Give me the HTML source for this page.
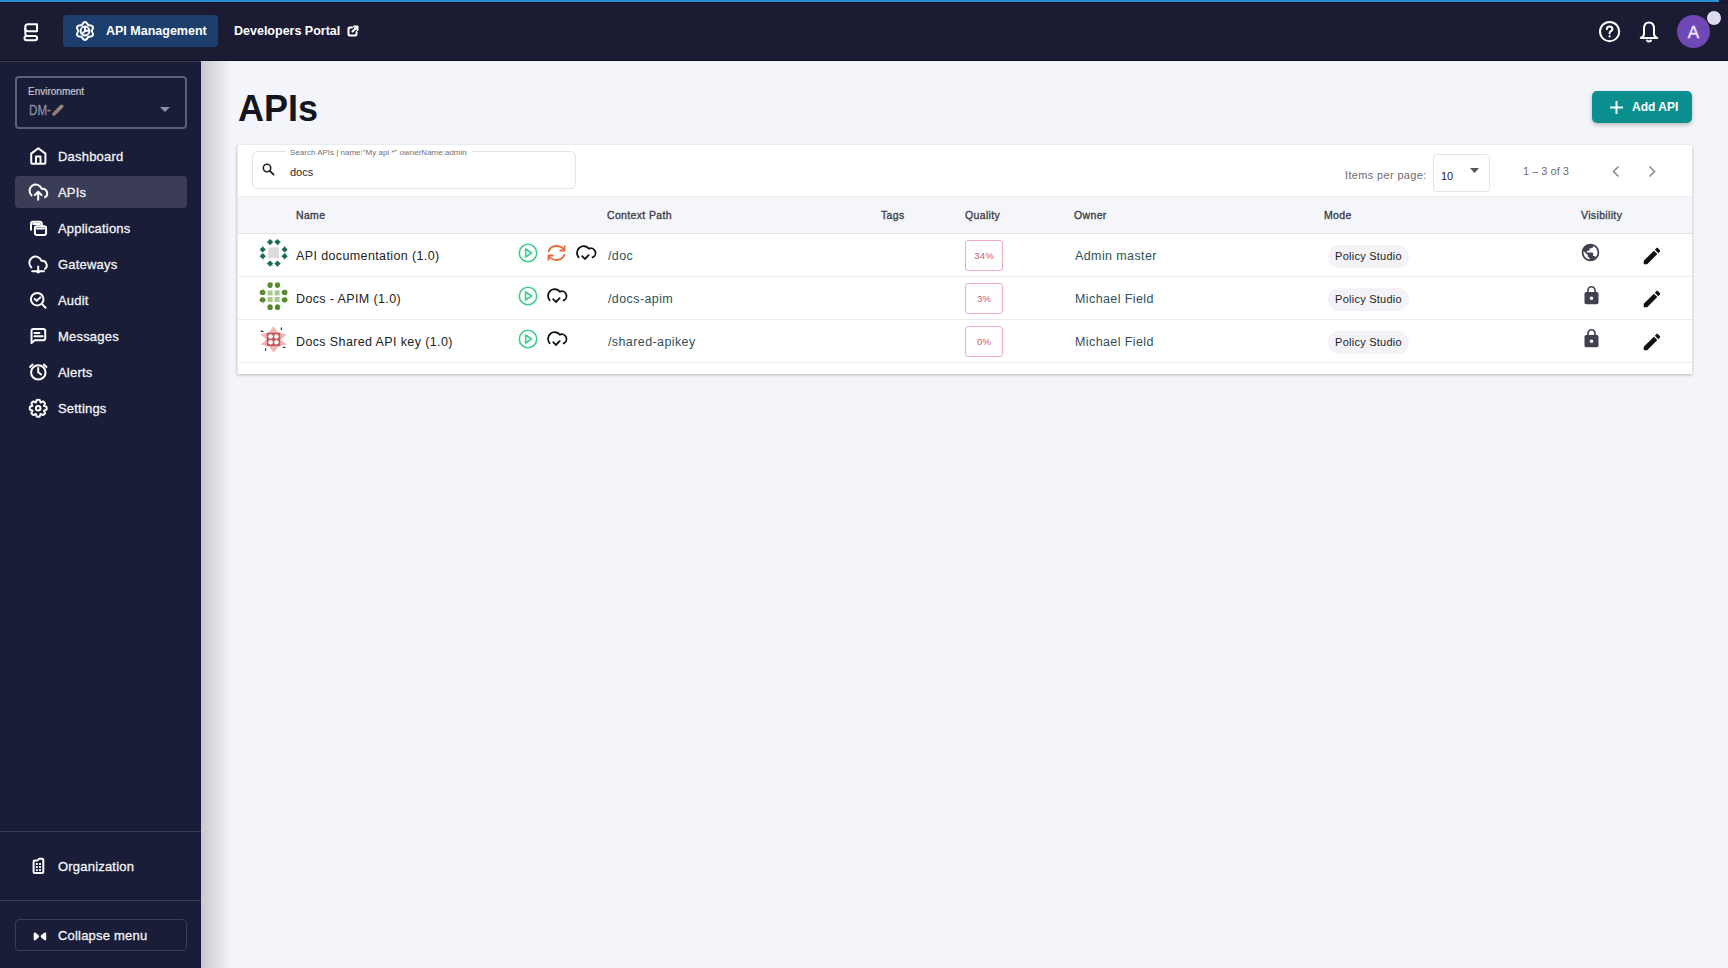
<!DOCTYPE html>
<html><head><meta charset="utf-8">
<style>
*{box-sizing:border-box;margin:0;padding:0}
html,body{width:1728px;height:968px;overflow:hidden;background:#f4f5fa;font-family:"Liberation Sans",sans-serif}
.abs{position:absolute}
svg{position:absolute;overflow:visible}
#topline{left:0;top:0;width:1719px;height:2px;background:#2a8ecf}
#header{left:0;top:2px;width:1728px;height:59px;background:#1b1c33;border-top:1px solid #0b1530;border-bottom:1px solid #10111f}
#side{left:0;top:61px;width:201px;height:907px;background:#191d37;border-top:1px solid #3a3c52}
#shadow{left:201px;top:61px;width:30px;height:907px;background:linear-gradient(to right,#c8c9d0,rgba(244,245,250,0))}
.navbtn{left:63px;top:15px;width:155px;height:32px;background:#1c3f6e;border-radius:4px}
.htext{color:#fff;font-weight:bold;font-size:12.5px;white-space:nowrap;line-height:15px}
.menu{left:15px;width:172px;height:32px;border-radius:4px}
.menu .lbl{position:absolute;left:43px;top:9px;color:#f2f2f5;font-size:13px;white-space:nowrap;line-height:15px;-webkit-text-stroke:.3px #f2f2f5;letter-spacing:.2px}
.menu svg{left:11px;top:4px;width:24px;height:24px}
.ic{fill:none;stroke:#fff;stroke-width:2;stroke-linecap:round;stroke-linejoin:round}
#card{left:237px;top:145px;width:1455px;height:229px;background:#fff;box-shadow:0 1px 3px rgba(0,0,0,.25)}
.th{top:64px;font-size:10.5px;color:#3d3f4c;white-space:nowrap;line-height:12px;-webkit-text-stroke:.35px #3d3f4c;letter-spacing:.35px}
.row{position:absolute;left:0;width:1455px;height:43px;border-bottom:1px solid #ebecef}
.nm{position:absolute;left:59px;top:15px;font-size:12.5px;color:#222;white-space:nowrap;line-height:14px;letter-spacing:.38px}
.cp{position:absolute;left:371px;top:15px;font-size:12.5px;color:#2f5157;white-space:nowrap;line-height:14px;letter-spacing:.4px}
.ow{position:absolute;left:838px;top:15px;font-size:12.5px;color:#2f5157;white-space:nowrap;line-height:14px;letter-spacing:.4px}
.qb{position:absolute;left:728px;top:6px;width:38px;height:31px;border:1px solid #efb0ba;border-radius:3px;color:#d0576a;font-size:9.5px;letter-spacing:.2px;text-align:center;line-height:29px}
.chip{position:absolute;left:1091px;top:11px;width:81px;height:23px;border-radius:12px;background:#f3f3f7;color:#222;font-size:11px;text-align:center;line-height:23px;letter-spacing:.25px}
</style></head><body>
<div class="abs" style="left:0;top:0;width:1728px;height:3px;background:#1b1c33"></div>
<div id="topline" class="abs"></div>
<div id="header" class="abs"></div>
<div id="side" class="abs"></div>
<div id="shadow" class="abs"></div>

<!-- header -->
<svg style="left:22px;top:20px" width="18" height="24" viewBox="0 0 18 24">
  <path class="ic" d="M15 4.3 V11.2 H6 Q3.3 11.2 3.3 8.5 V7 Q3.3 4.3 6 4.3 Z" stroke-width="2.1"/>
  <path class="ic" d="M4.6 15.9 H13 Q15.1 15.9 15.1 18.1 Q15.1 20.3 13 20.3 H4.6 Q2.5 20.3 2.5 18.1 Q2.5 15.9 4.6 15.9 Z" stroke-width="2.1"/>
  <path class="ic" d="M3.3 8.5 V13.2 Q3.3 15 4.6 15.9" stroke-width="2.1"/>
</svg>
<div class="abs navbtn"></div>
<svg style="left:75px;top:20px" width="20" height="22" viewBox="0 0 20 22">
  <path class="ic" d="M6.70 5.28 Q10.00 -1.20 13.30 5.28 Q20.57 4.90 16.60 11.00 Q20.57 17.10 13.30 16.72 Q10.00 23.20 6.70 16.72 Q-0.57 17.10 3.40 11.00 Q-0.57 4.90 6.70 5.28 Z" stroke-width="2"/>
  <circle class="ic" cx="10" cy="11" r="4.4" stroke-width="1.8"/>
  <path class="ic" d="M10 7.5 V11 L7.6 13.4 M10 11 L13.3 10.4" stroke-width="1.3"/>
</svg>
<div class="abs htext" style="left:106px;top:24px">API Management</div>
<div class="abs htext" style="left:234px;top:24px">Developers Portal</div>
<svg style="left:347px;top:25px" width="12" height="12" viewBox="0 0 12 12">
  <path class="ic" d="M5 2.5 H2.5 Q1.5 2.5 1.5 3.5 V9.5 Q1.5 10.5 2.5 10.5 H8.5 Q9.5 10.5 9.5 9.5 V7" stroke-width="1.4"/>
  <path class="ic" d="M5.5 6.5 L10.5 1.5 M7 1.5 H10.5 V5" stroke-width="1.4"/>
</svg>
<svg style="left:1598px;top:20px" width="24" height="24" viewBox="0 0 24 24">
  <circle class="ic" cx="11.6" cy="11.6" r="9.6" stroke-width="1.9"/>
  <path class="ic" d="M8.8 9.2 Q8.8 6.4 11.6 6.4 Q14.4 6.4 14.4 9 Q14.4 10.6 12.6 11.4 Q11.6 11.9 11.6 13.4" stroke-width="1.9"/>
  <circle cx="11.6" cy="16.4" r="1.1" fill="#fff"/>
</svg>
<svg style="left:1638px;top:20px" width="22" height="24" viewBox="0 0 22 24">
  <path class="ic" d="M11 2.6 Q16 2.6 16 9 V14 Q16 16.5 19.2 18 H2.8 Q6 16.5 6 14 V9 Q6 2.6 11 2.6 Z" stroke-width="1.9"/>
  <path class="ic" d="M9 20.5 Q11 22.5 13 20.5" stroke-width="1.9"/>
</svg>
<div class="abs" style="left:1677px;top:15px;width:33px;height:33px;border-radius:50%;background:#7048b6;color:#f0e8ff;font-size:17px;text-align:center;line-height:36px;-webkit-text-stroke:.4px #f0e8ff">A</div>
<div class="abs" style="left:1706px;top:10px;width:16px;height:16px;border-radius:50%;background:#dedbef;border:1.5px solid #14152a"></div>

<!-- sidebar -->
<div class="abs" style="left:15px;top:76px;width:172px;height:53px;border:2px solid #5c5f75;border-radius:4px"></div>
<div class="abs" style="left:28px;top:86px;color:#c4c5cc;font-size:10px;-webkit-text-stroke:.2px #c4c5cc">Environment</div>
<div class="abs" style="left:29px;top:102px;color:#8a8ca0;font-size:14px;line-height:16px;transform:scaleX(.83);transform-origin:0 0;-webkit-text-stroke:.3px #8a8ca0">DM-</div>
<svg style="left:51px;top:102.5px" width="14" height="14" viewBox="0 0 14 14"><path d="M3 11 L10.5 3.5" stroke="#947d6e" stroke-width="3.8" stroke-linecap="round"/><path d="M7.5 6 L10.5 3.5" stroke="#a08a78" stroke-width="2" stroke-linecap="round"/></svg>
<svg style="left:160px;top:107px" width="10" height="5" viewBox="0 0 10 5"><path d="M0 0 H10 L5 5 Z" fill="#8d8fa3"/></svg>

<div class="abs menu" style="top:140px"><svg viewBox="0 0 24 24"><path class="ic" d="M5.2 18.6 V9.6 L12.3 4.3 L19.4 9.6 V18.6 Q19.4 19.8 18.2 19.8 H6.4 Q5.2 19.8 5.2 18.6 Z M10 19.8 V12.5 H14.5 V19.8"/></svg><span class="lbl">Dashboard</span></div>
<div class="abs menu" style="top:176px;background:#3a3d55"><svg viewBox="0 0 24 24"><path class="ic" d="M5.6 15.4 A6.2 6.2 0 1 1 15.6 8.8 A4.6 4.6 0 0 1 19.0 17.2 M12.2 19.7 V12 M8.9 15 L12.2 11.8 L15.5 15"/></svg><span class="lbl">APIs</span></div>
<div class="abs menu" style="top:212px"><svg viewBox="0 0 24 24"><path class="ic" d="M5 13.8 V7.8 Q5 5.8 7 5.8 H13.8 Q15.8 5.8 15.8 7.8 V10 M7.3 8.1 H13.8"/><rect class="ic" x="8.9" y="10.2" width="11.2" height="8.9" rx="2"/><path class="ic" d="M11 12.5 H18" stroke-width="1.6"/></svg><span class="lbl">Applications</span></div>
<div class="abs menu" style="top:248px"><svg viewBox="0 0 24 24"><path class="ic" d="M5.4 15.4 A6.2 6.2 0 1 1 15.4 8.8 A4.6 4.6 0 0 1 18.9 17 M12.2 14.5 V19 M6.2 19.2 H17.9"/><circle cx="12.2" cy="19.6" r="1.9" fill="#fff"/></svg><span class="lbl">Gateways</span></div>
<div class="abs menu" style="top:284px"><svg viewBox="0 0 24 24"><circle class="ic" cx="11.2" cy="11.2" r="6.3" stroke-width="2.2"/><path class="ic" d="M8.6 10.9 L10.7 12.9 L14.3 9.4"/><path class="ic" d="M16.3 16.4 L19.6 19.7" stroke-width="2.6"/></svg><span class="lbl">Audit</span></div>
<div class="abs menu" style="top:320px"><svg viewBox="0 0 24 24"><path class="ic" d="M5.5 19 V7 Q5.5 5 7.5 5 H17.2 Q19.2 5 19.2 7 V14.2 Q19.2 16.2 17.2 16.2 H8.8 Z"/><path class="ic" d="M8.4 9.1 H13.4 M8.4 12.3 H16.6" stroke-width="1.9"/></svg><span class="lbl">Messages</span></div>
<div class="abs menu" style="top:356px"><svg viewBox="0 0 24 24"><circle class="ic" cx="12.3" cy="12.4" r="7.2"/><path class="ic" d="M12.2 8 V12.3 L15.1 14.5 M4 6.9 L6.6 4.6 M20.5 6.9 L17.9 4.6"/></svg><span class="lbl">Alerts</span></div>
<div class="abs menu" style="top:392px"><svg viewBox="0 0 24 24"><path class="ic" d="M9.83 6.47 L10.74 3.93 Q12.20 3.46 13.66 3.93 L14.57 6.47 L17.02 5.32 Q18.38 6.02 19.08 7.38 L17.93 9.83 L20.47 10.74 Q20.94 12.20 20.47 13.66 L17.93 14.57 L19.08 17.02 Q18.38 18.38 17.02 19.08 L14.57 17.93 L13.66 20.47 Q12.20 20.94 10.74 20.47 L9.83 17.93 L7.38 19.08 Q6.02 18.38 5.32 17.02 L6.47 14.57 L3.93 13.66 Q3.46 12.20 3.93 10.74 L6.47 9.83 L5.32 7.38 Q6.02 6.02 7.38 5.32 L9.83 6.47 Z"/><circle class="ic" cx="12.2" cy="12.2" r="2.3" stroke-width="1.9"/></svg><span class="lbl">Settings</span></div>

<div class="abs" style="left:0;top:831px;width:201px;height:1px;background:#3a3c52"></div>
<div class="abs" style="left:0;top:900px;width:201px;height:1px;background:#3a3c52"></div>
<div class="abs menu" style="top:850px"><svg viewBox="0 0 24 24"><path class="ic" d="M7.6 7.6 Q7.6 6.5 8.7 6.5 H11 Q12 6.5 12.4 5.6 Q12.8 4.8 13.8 4.8 H16.2 Q17.3 4.8 17.3 5.9 V18 Q17.3 19.1 16.2 19.1 H8.7 Q7.6 19.1 7.6 18 Z"/><path d="M9.9 9 h2 v2 h-2z M13 9 h2 v2 h-2z M9.9 12 h2 v2 h-2z M13 12 h2 v2 h-2z M9.9 15 h2 v2 h-2z M13 15 h2 v2 h-2z" fill="#e8e8ee"/></svg><span class="lbl">Organization</span></div>
<div class="abs menu" style="top:919px;border:1px solid #3a3d55"><svg viewBox="0 0 24 24"><path d="M7.3 9.6 Q7.3 8.6 8.3 9.2 L11.2 11.7 Q11.8 12.4 11.2 13.1 L8.3 15.6 Q7.3 16.2 7.3 15.2 Z M18.6 9.6 Q18.6 8.6 17.6 9.2 L14.5 11.7 Q13.9 12.4 14.5 13.1 L17.6 15.6 Q18.6 16.2 18.6 15.2 Z" fill="#fff" stroke="#fff" stroke-width="1.2" stroke-linejoin="round"/></svg><span class="lbl" style="left:42px;top:8px">Collapse menu</span></div>

<!-- main -->
<div class="abs" style="left:238px;top:88px;font-size:36px;font-weight:bold;color:#14151f">APIs</div>
<div class="abs" style="left:1592px;top:91px;width:100px;height:32px;background:#0b8e8e;border-radius:5px;box-shadow:0 2px 4px rgba(0,0,0,.25)"></div>
<svg style="left:1609px;top:100px" width="15" height="15" viewBox="0 0 15 15"><path d="M7.5 1 V14 M1 7.5 H14" stroke="#f2fffb" stroke-width="2"/></svg>
<div class="abs" style="left:1632px;top:100px;font-size:12px;font-weight:bold;color:#fff;white-space:nowrap;line-height:14px">Add API</div>
<div id="card" class="abs">
  <!-- search -->
  <div class="abs" style="left:15px;top:6px;width:324px;height:38px;border:1px solid #e3e4e8;border-radius:5px"></div>
  <div class="abs" style="left:49px;top:4px;width:186px;height:6px;background:#fff"></div>
  <div class="abs" style="left:53px;top:3px;font-size:8px;color:#6f7078;white-space:nowrap;line-height:10px">Search APIs | name:"My api *" ownerName:admin</div>
  <svg style="left:25px;top:18px" width="13" height="13" viewBox="0 0 13 13"><circle cx="5" cy="5" r="3.7" fill="none" stroke="#222" stroke-width="1.6"/><path d="M7.8 7.8 L11.6 11.6" stroke="#222" stroke-width="1.8" stroke-linecap="round"/></svg>
  <div class="abs" style="left:53px;top:21px;font-size:11px;color:#2a2a2a;line-height:13px">docs</div>
  <!-- paginator -->
  <div class="abs" style="left:1108px;top:24px;font-size:11px;letter-spacing:.35px;color:#6b6c72;white-space:nowrap;line-height:13px">Items per page:</div>
  <div class="abs" style="left:1196px;top:9px;width:57px;height:38px;border:1px solid #e3e4e8;border-radius:4px"></div>
  <div class="abs" style="left:1204px;top:25px;font-size:11px;color:#222;line-height:13px">10</div>
  <svg style="left:1233px;top:23px" width="9" height="5" viewBox="0 0 9 5"><path d="M0 0 H9 L4.5 5 Z" fill="#555"/></svg>
  <div class="abs" style="left:1286px;top:20px;font-size:11px;color:#6b6c72;white-space:nowrap;line-height:13px">1 – 3 of 3</div>
  <svg style="left:1374px;top:20px" width="10" height="13" viewBox="0 0 10 13"><path d="M7.5 1.5 L2.5 6.5 L7.5 11.5" fill="none" stroke="#8a8b92" stroke-width="1.6"/></svg>
  <svg style="left:1410px;top:20px" width="10" height="13" viewBox="0 0 10 13"><path d="M2.5 1.5 L7.5 6.5 L2.5 11.5" fill="none" stroke="#8a8b92" stroke-width="1.6"/></svg>
  <!-- table header -->
  <div class="abs" style="left:0;top:51px;width:1455px;height:38px;background:#f5f6fa;border-top:1px solid #eceef2;border-bottom:1px solid #e4e5ea"></div>
  <div class="th abs" style="left:59px">Name</div>
  <div class="th abs" style="left:370px">Context Path</div>
  <div class="th abs" style="left:644px">Tags</div>
  <div class="th abs" style="left:728px">Quality</div>
  <div class="th abs" style="left:837px">Owner</div>
  <div class="th abs" style="left:1087px">Mode</div>
  <div class="th abs" style="left:1344px">Visibility</div>
  <div class="row" style="top:89px"><svg style="left:22px;top:4px" width="28" height="28" viewBox="0 0 28 28"><circle cx="14.6" cy="14.8" r="12.6" fill="none" stroke="#9ad9c6" stroke-width="0.9" stroke-dasharray="2.6 2.4"/><rect x="9.2" y="9.4" width="10.8" height="10.8" fill="#dcdcde"/><g fill="#1e6a54"><path d="M11.1 0.9999999999999996 L14.2 4.1 L11.1 7.199999999999999 L8.0 4.1 Z"/><path d="M18.5 0.9999999999999996 L21.6 4.1 L18.5 7.199999999999999 L15.4 4.1 Z"/><path d="M3.8 8.4 L6.9 11.5 L3.8 14.6 L0.6999999999999997 11.5 Z"/><path d="M3.8 15.1 L6.9 18.2 L3.8 21.3 L0.6999999999999997 18.2 Z"/><path d="M25.6 8.4 L28.700000000000003 11.5 L25.6 14.6 L22.5 11.5 Z"/><path d="M25.6 15.1 L28.700000000000003 18.2 L25.6 21.3 L22.5 18.2 Z"/><path d="M11.1 22.5 L14.2 25.6 L11.1 28.700000000000003 L8.0 25.6 Z"/><path d="M18.5 22.5 L21.6 25.6 L18.5 28.700000000000003 L15.4 25.6 Z"/></g></svg><div class="nm">API documentation (1.0)</div><svg style="left:281px;top:9px" width="20" height="20" viewBox="0 0 20 20"><circle cx="10" cy="10" r="8.7" fill="none" stroke="#3ccf8e" stroke-width="1.6"/><path d="M7.6 6 L13.6 10 L7.6 14 Z" fill="none" stroke="#3ccf8e" stroke-width="1.6" stroke-linejoin="round"/></svg><svg style="left:308px;top:10px" width="23" height="18" viewBox="0 0 23 18"><path d="M3.5 8 Q5 2 11.5 2 Q16 2 19 5.5" fill="none" stroke="#e8673a" stroke-width="1.8"/><path d="M19.5 1.5 V6.5 H14.5" fill="none" stroke="#e8673a" stroke-width="1.8" stroke-linejoin="round"/><path d="M19.5 10 Q18 16 11.5 16 Q7 16 4 12.5" fill="none" stroke="#e8673a" stroke-width="1.8"/><path d="M3.5 16.5 V11.5 H8.5" fill="none" stroke="#e8673a" stroke-width="1.8" stroke-linejoin="round"/></svg><svg style="left:337px;top:8px" width="24" height="20" viewBox="0 0 24 20"><path d="M4.6 15.2 A6.3 6.3 0 1 1 14.8 6.6 A4.6 4.6 0 0 1 18.6 15.4" fill="none" stroke="#111" stroke-width="1.8" stroke-linecap="round"/><path d="M8.2 14.2 L10.9 17 L14.6 13.2" fill="none" stroke="#111" stroke-width="1.8" stroke-linecap="round" stroke-linejoin="round"/></svg><div class="cp">/doc</div><div class="qb">34%</div><div class="ow">Admin master</div><div class="chip">Policy Studio</div><svg style="left:1343px;top:8px" width="21" height="21" viewBox="0 0 24 24"><path fill="#404150" d="M12 2C6.48 2 2 6.48 2 12s4.48 10 10 10 10-4.48 10-10S17.52 2 12 2zm-1 17.93c-3.95-.49-7-3.85-7-7.93 0-.62.08-1.21.21-1.79L9 15v1c0 1.1.9 2 2 2v1.93zm6.9-2.54c-.26-.81-1-1.39-1.9-1.39h-1v-3c0-.55-.45-1-1-1H8v-2h2c.55 0 1-.45 1-1V7h2c1.1 0 2-.9 2-2v-.41c2.93 1.19 5 4.06 5 7.41 0 2.08-.8 3.97-2.1 5.39z"/></svg><svg style="left:1404px;top:11px" width="22" height="22" viewBox="0 0 24 24"><path fill="#111" d="M3 17.25V21h3.75L17.81 9.94l-3.75-3.75L3 17.25zM20.71 7.04c.39-.39.39-1.02 0-1.41l-2.34-2.34c-.39-.39-1.02-.39-1.41 0l-1.83 1.83 3.75 3.75 1.83-1.83z"/></svg></div>
<div class="row" style="top:132px"><svg style="left:22px;top:5px" width="28" height="28" viewBox="0 0 28 28"><circle cx="14.6" cy="14.1" r="12.4" fill="none" stroke="#c4e09a" stroke-width="0.9" stroke-dasharray="2.6 2.4"/><g fill="#a8c98a"><rect x="8.6" y="8.4" width="5" height="5"/><rect x="15.6" y="8.4" width="5" height="5"/><rect x="8.6" y="15" width="5" height="5"/><rect x="15.6" y="15" width="5" height="5"/></g><g fill="#5a8a30"><ellipse cx="11.1" cy="3.1" rx="2.6" ry="2.9"/><ellipse cx="18.5" cy="3.1" rx="2.6" ry="2.9"/><ellipse cx="11.1" cy="25.2" rx="2.6" ry="2.9"/><ellipse cx="18.5" cy="25.2" rx="2.6" ry="2.9"/><ellipse cx="3.6" cy="10.4" rx="2.9" ry="2.6"/><ellipse cx="3.6" cy="17.8" rx="2.9" ry="2.6"/><ellipse cx="25.6" cy="10.4" rx="2.9" ry="2.6"/><ellipse cx="25.6" cy="17.8" rx="2.9" ry="2.6"/></g></svg><div class="nm">Docs - APIM (1.0)</div><svg style="left:281px;top:9px" width="20" height="20" viewBox="0 0 20 20"><circle cx="10" cy="10" r="8.7" fill="none" stroke="#3ccf8e" stroke-width="1.6"/><path d="M7.6 6 L13.6 10 L7.6 14 Z" fill="none" stroke="#3ccf8e" stroke-width="1.6" stroke-linejoin="round"/></svg><svg style="left:308px;top:8px" width="24" height="20" viewBox="0 0 24 20"><path d="M4.6 15.2 A6.3 6.3 0 1 1 14.8 6.6 A4.6 4.6 0 0 1 18.6 15.4" fill="none" stroke="#111" stroke-width="1.8" stroke-linecap="round"/><path d="M8.2 14.2 L10.9 17 L14.6 13.2" fill="none" stroke="#111" stroke-width="1.8" stroke-linecap="round" stroke-linejoin="round"/></svg><div class="cp">/docs-apim</div><div class="qb">3%</div><div class="ow">Michael Field</div><div class="chip">Policy Studio</div><svg style="left:1344px;top:8px" width="21" height="21" viewBox="0 0 24 24"><path fill="#404150" d="M18 8h-1V6c0-2.76-2.24-5-5-5S7 3.24 7 6v2H6c-1.1 0-2 .9-2 2v10c0 1.1.9 2 2 2h12c1.1 0 2-.9 2-2V10c0-1.1-.9-2-2-2zm-6 9c-1.1 0-2-.9-2-2s.9-2 2-2 2 .9 2 2-.9 2-2 2zm3.1-9H8.9V6c0-1.71 1.39-3.1 3.1-3.1 1.71 0 3.1 1.39 3.1 3.1v2z"/></svg><svg style="left:1404px;top:11px" width="22" height="22" viewBox="0 0 24 24"><path fill="#111" d="M3 17.25V21h3.75L17.81 9.94l-3.75-3.75L3 17.25zM20.71 7.04c.39-.39.39-1.02 0-1.41l-2.34-2.34c-.39-.39-1.02-.39-1.41 0l-1.83 1.83 3.75 3.75 1.83-1.83z"/></svg></div>
<div class="row" style="top:175px"><svg style="left:22px;top:5px" width="28" height="28" viewBox="0 0 28 28"><path d="M14.5 1.2 L19 7.5 L27.5 9.5 L21.5 14.4 L27.5 19.5 L19.5 21.3 L14.5 27.5 L10 21.3 L1.5 19.5 L7.5 14.4 L1.5 9.2 L10 7.5 Z" fill="#f2b3b3"/><rect x="7.8" y="7.7" width="13.4" height="13.4" fill="#c2585c"/><g fill="#fff"><circle cx="11.6" cy="11.5" r="2.3"/><circle cx="17.4" cy="11.5" r="2.3"/><circle cx="11.6" cy="17.3" r="2.3"/><circle cx="17.4" cy="17.3" r="2.3"/></g><g stroke="#222" stroke-width="1.1" stroke-linecap="round"><path d="M2 6 L4 6.6"/><path d="M22.5 2.8 L22.2 4.8"/><path d="M26.2 22.5 L24.2 22.2"/><path d="M6.4 25.5 L6.8 23.5"/></g></svg><div class="nm">Docs Shared API key (1.0)</div><svg style="left:281px;top:9px" width="20" height="20" viewBox="0 0 20 20"><circle cx="10" cy="10" r="8.7" fill="none" stroke="#3ccf8e" stroke-width="1.6"/><path d="M7.6 6 L13.6 10 L7.6 14 Z" fill="none" stroke="#3ccf8e" stroke-width="1.6" stroke-linejoin="round"/></svg><svg style="left:308px;top:8px" width="24" height="20" viewBox="0 0 24 20"><path d="M4.6 15.2 A6.3 6.3 0 1 1 14.8 6.6 A4.6 4.6 0 0 1 18.6 15.4" fill="none" stroke="#111" stroke-width="1.8" stroke-linecap="round"/><path d="M8.2 14.2 L10.9 17 L14.6 13.2" fill="none" stroke="#111" stroke-width="1.8" stroke-linecap="round" stroke-linejoin="round"/></svg><div class="cp">/shared-apikey</div><div class="qb">0%</div><div class="ow">Michael Field</div><div class="chip">Policy Studio</div><svg style="left:1344px;top:8px" width="21" height="21" viewBox="0 0 24 24"><path fill="#404150" d="M18 8h-1V6c0-2.76-2.24-5-5-5S7 3.24 7 6v2H6c-1.1 0-2 .9-2 2v10c0 1.1.9 2 2 2h12c1.1 0 2-.9 2-2V10c0-1.1-.9-2-2-2zm-6 9c-1.1 0-2-.9-2-2s.9-2 2-2 2 .9 2 2-.9 2-2 2zm3.1-9H8.9V6c0-1.71 1.39-3.1 3.1-3.1 1.71 0 3.1 1.39 3.1 3.1v2z"/></svg><svg style="left:1404px;top:11px" width="22" height="22" viewBox="0 0 24 24"><path fill="#111" d="M3 17.25V21h3.75L17.81 9.94l-3.75-3.75L3 17.25zM20.71 7.04c.39-.39.39-1.02 0-1.41l-2.34-2.34c-.39-.39-1.02-.39-1.41 0l-1.83 1.83 3.75 3.75 1.83-1.83z"/></svg></div>
<div class="abs" style="left:0;top:0;width:1px;height:229px;background:#e6e7ec"></div>
</div>
</body></html>
